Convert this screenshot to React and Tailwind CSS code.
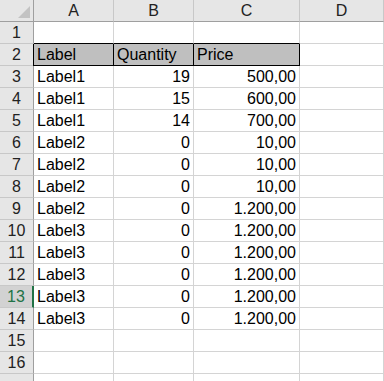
import React from 'react';

const ROWS = [
  null,
  ['Label', 'Quantity', 'Price'],
  ['Label1', '19', '500,00'],
  ['Label1', '15', '600,00'],
  ['Label1', '14', '700,00'],
  ['Label2', '0', '10,00'],
  ['Label2', '0', '10,00'],
  ['Label2', '0', '10,00'],
  ['Label2', '0', '1.200,00'],
  ['Label3', '0', '1.200,00'],
  ['Label3', '0', '1.200,00'],
  ['Label3', '0', '1.200,00'],
  ['Label3', '0', '1.200,00'],
  ['Label3', '0', '1.200,00'],
  null,
  null,
  null,
];

const ColHeader = ({ children }) => (
  <div className="h-[22px] flex items-center justify-center bg-[#e6e6e6] border-r border-r-[#c8c8c8] border-b border-b-[#9f9f9f] text-[#222]">
    {children}
  </div>
);

const App = () => {
  return (
    <div
      className="w-[384px] h-[381px] overflow-hidden bg-white text-[16px] text-black"
      style={{ fontFamily: '"Liberation Sans", Arial, sans-serif' }}
    >
      <div className="grid grid-cols-[34px_80px_80px_106px_84px_1px]">
        {/* corner */}
        <div className="h-[22px] relative bg-[#e6e6e6] border-r border-r-[#9f9f9f] border-b border-b-[#9f9f9f]">
          <div className="absolute right-[3px] bottom-[3px] w-0 h-0 border-l-[12px] border-l-transparent border-b-[12px] border-b-[#c3c3c3]" />
        </div>
        <ColHeader>A</ColHeader>
        <ColHeader>B</ColHeader>
        <ColHeader>C</ColHeader>
        <ColHeader>D</ColHeader>
        <div className="h-[22px] bg-[#e6e6e6] border-b border-b-[#9f9f9f]" />

        {ROWS.map((row, i) => {
          const n = i + 1;
          const isHead = n === 2;
          const aboveHead = n === 1;
          const active = n === 13;
          // last row is only a sliver at the bottom edge, number not visible
          const label = n < 17 ? n : '';
          const cellBase = 'h-[22px] flex items-center px-[3px] border-r border-b leading-none';
          const grid = 'border-r-[#d4d4d4] border-b-[#d4d4d4]';
          const cellCls = isHead
            ? 'bg-[#bfbfbf] border-r-black border-b-black'
            : aboveHead
            ? 'border-r-[#d4d4d4] border-b-black'
            : grid;
          const cells = row || ['', '', ''];
          return (
            <React.Fragment key={n}>
              <div
                className={
                  'h-[22px] flex items-center justify-center border-b border-b-[#c8c8c8] border-r ' +
                  (active
                    ? 'bg-[#d2d2d2] text-[#217346] border-r-[#217346] border-r-2'
                    : 'bg-[#e6e6e6] text-[#222] border-r-[#9f9f9f]')
                }
              >
                {label}
              </div>
              <div className={`${cellBase} ${cellCls} ${isHead ? 'border-l border-l-black -ml-px' : ''}`}>{cells[0]}</div>
              <div className={`${cellBase} ${cellCls} ${isHead ? '' : 'justify-end'}`}>{cells[1]}</div>
              <div className={`${cellBase} ${cellCls} ${isHead ? '' : 'justify-end'}`}>{cells[2]}</div>
              <div className={`${cellBase} ${grid}`} />
              <div className="h-[22px] border-b border-b-[#d4d4d4]" />
            </React.Fragment>
          );
        })}
      </div>
    </div>
  );
};

export default App;
